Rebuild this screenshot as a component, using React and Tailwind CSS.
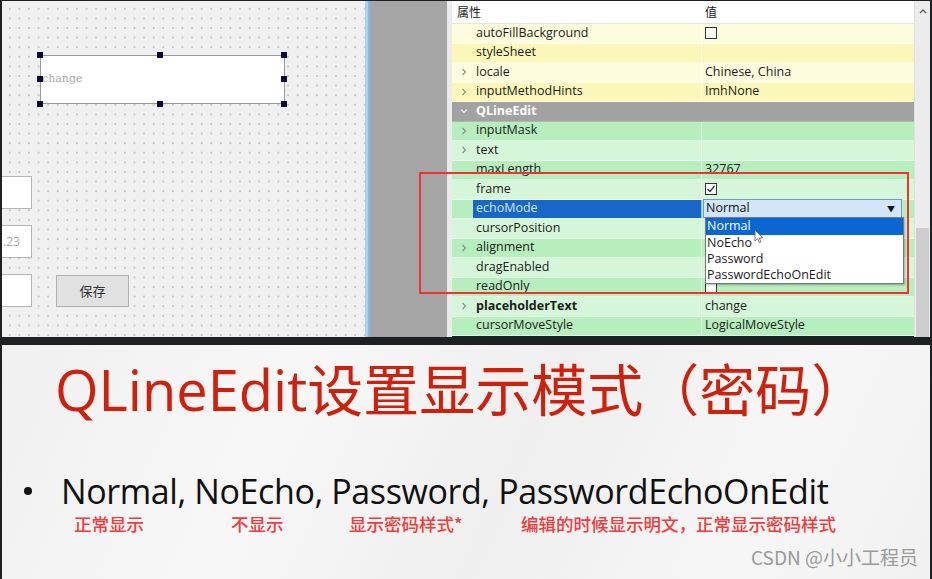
import React from 'react'

const ui = { fontFamily: '"Open Sans", "Noto Sans CJK SC", sans-serif' }
const cjk = { fontFamily: '"Noto Sans CJK SC", sans-serif' }

const ROWS = [
  { name: 'autoFillBackground', bg: 'bg-[#fdfcdc]', value: 'box' },
  { name: 'styleSheet', bg: 'bg-[#fbf7b8]' },
  { name: 'locale', bg: 'bg-[#fdfcdc]', arrow: true, value: 'Chinese, China' },
  { name: 'inputMethodHints', bg: 'bg-[#fbf7b8]', arrow: true, value: 'ImhNone' },
  { group: 'QLineEdit' },
  { name: 'inputMask', bg: 'bg-[#b6eebe]', arrow: true },
  { name: 'text', bg: 'bg-[#d6f6da]', arrow: true },
  { name: 'maxLength', bg: 'bg-[#b6eebe]', value: '32767' },
  { name: 'frame', bg: 'bg-[#d6f6da]', value: 'check' },
  { name: 'echoMode', bg: 'bg-[#b6eebe]', selected: true, value: 'combo' },
  { name: 'cursorPosition', bg: 'bg-[#d6f6da]' },
  { name: 'alignment', bg: 'bg-[#b6eebe]', arrow: true },
  { name: 'dragEnabled', bg: 'bg-[#d6f6da]' },
  { name: 'readOnly', bg: 'bg-[#b6eebe]', value: 'box' },
  { name: 'placeholderText', bg: 'bg-[#d6f6da]', arrow: true, bold: true, value: 'change' },
  { name: 'cursorMoveStyle', bg: 'bg-[#b6eebe]', value: 'LogicalMoveStyle' },
]

function Chevron({ down }) {
  return (
    <svg width="8" height="8" viewBox="0 0 8 8" className="block">
      {down ? (
        <path d="M1 2.5 L4 5.5 L7 2.5" fill="none" stroke="#e8e8e8" strokeWidth="1.3" />
      ) : (
        <path d="M2.5 1 L5.5 4 L2.5 7" fill="none" stroke="#8a8a8a" strokeWidth="1.1" />
      )}
    </svg>
  )
}

function CheckBox({ checked }) {
  return (
    <div className="w-[12px] h-[12px] border border-[#333] bg-white flex items-center justify-center">
      {checked && (
        <svg width="10" height="10" viewBox="0 0 10 10">
          <path d="M1.5 5 L4 7.5 L8.5 2" fill="none" stroke="#333" strokeWidth="1.2" />
        </svg>
      )}
    </div>
  )
}

function Value({ v }) {
  if (v === 'box') return <CheckBox />
  if (v === 'check') return <CheckBox checked />
  if (v === 'combo')
    return (
      <div className="w-[199px] h-[19px] -ml-[2px] border border-[#6d9bc9] bg-[#d3e6f7] flex items-center justify-between pl-[2px] pr-[6px] text-[#111]">
        <span>Normal</span>
        <span className="text-[8px] leading-none">▼</span>
      </div>
    )
  return <span>{v}</span>
}

function Row({ r }) {
  if (r.group)
    return (
      <div className="flex h-[19.5px] shrink-0 bg-[#a2a2a2] border-b border-[#b4b4b4] items-center">
        <div className="w-[21px] flex justify-center pl-[2px]">
          <Chevron down />
        </div>
        <span className="pl-[3px] text-white font-bold">{r.group}</span>
      </div>
    )
  return (
    <div className={`flex h-[19.5px] shrink-0 border-b border-[#ffffff80] ${r.bg}`}>
      <div className="w-[21px] flex items-center justify-center pl-[2px]">{r.arrow && <Chevron />}</div>
      <div
        className={`w-[229px] flex items-center pl-[3px] border-r border-[#ffffff90] ${
          r.selected ? 'bg-[#1767c9] text-[#d4e6ff]' : 'text-[#1c1c1c]'
        } ${r.bold ? 'font-bold' : ''}`}
      >
        {r.name}
      </div>
      <div className="flex-1 flex items-center pl-[3px] text-[#1c1c1c]">{r.value && <Value v={r.value} />}</div>
    </div>
  )
}

function Handle({ cls }) {
  return <div className={`absolute w-[6px] h-[6px] bg-[#0a0a3c] ${cls}`} />
}

function Designer() {
  return (
    <div className="relative w-[363px] h-full overflow-hidden bg-[#f0f0f0] bg-[radial-gradient(circle,#c8c8c8_0.8px,transparent_1.2px)] bg-[size:9.6px_9.6px] bg-[position:3px_3px]">
      <div className="absolute left-[38px] top-[54px] w-[245px] h-[49px] bg-white border border-[#9a9a9a] flex items-center">
        <span className="pl-[1px] text-[11px] text-[#a8a8a8]" style={{ fontFamily: '"DejaVu Serif", "Liberation Serif", serif' }}>
          change
        </span>
      </div>
      <Handle cls="left-[35px] top-[51px]" />
      <Handle cls="left-[155px] top-[51px]" />
      <Handle cls="left-[279px] top-[51px]" />
      <Handle cls="left-[35px] top-[75px]" />
      <Handle cls="left-[279px] top-[75px]" />
      <Handle cls="left-[35px] top-[100px]" />
      <Handle cls="left-[155px] top-[100px]" />
      <Handle cls="left-[279px] top-[100px]" />

      <div className="absolute -left-[4px] top-[175px] w-[34px] h-[33px] bg-white border border-[#b4b4b4]" />
      <div className="absolute -left-[4px] top-[224px] w-[34px] h-[33px] bg-white border border-[#b4b4b4] flex items-center">
        <span className="pl-[4px] text-[12px] text-[#aaa]" style={ui}>.23</span>
      </div>
      <div className="absolute -left-[4px] top-[273px] w-[34px] h-[33px] bg-white border border-[#b4b4b4]" />
      <div
        className="absolute left-[54px] top-[274px] w-[73px] h-[32px] bg-[#e1e1e1] border border-[#b0b0b0] flex items-center justify-center text-[13px] text-[#333]"
        style={cjk}
      >
        保存
      </div>
    </div>
  )
}

function Scrollbar() {
  return (
    <div className="w-[16px] h-full flex flex-col bg-[#ececec] border-l border-[#e0e0e0]">
      <div className="h-[20px] flex items-center justify-center">
        <svg width="8" height="6" viewBox="0 0 8 6">
          <path d="M1 5 L4 2 L7 5" fill="none" stroke="#606060" strokeWidth="1.4" />
        </svg>
      </div>
      <div className="h-[207px]" />
      <div className="flex-1 bg-[#cdcdcd] mx-[1px]" />
    </div>
  )
}

function TopShot() {
  return (
    <div className="relative h-[337px] shrink-0 pt-[1px] flex text-[12.5px]" style={ui}>
      <Designer />
      <div className="w-[5px] h-full bg-[#a8d2ee] border-r-2 border-[#86b8df]" />
      <div className="w-[77px] h-full bg-[#a5a5a5]" />
      <div className="w-[5px] h-full bg-[#ebebeb]" />
      <div className="w-[462px] h-full flex flex-col overflow-hidden">
        <div className="h-[23px] shrink-0 bg-white flex items-center border-b border-[#e4e4e4] text-[12px] text-[#222]" style={cjk}>
          <div className="w-[250px] pl-[5px]">属性</div>
          <div className="pl-[3px]">值</div>
        </div>
        {ROWS.map((r, i) => (
          <Row key={i} r={r} />
        ))}
      </div>
      <Scrollbar />

      <div className="absolute left-[417px] top-[172px] w-[490px] h-[122px] border-2 border-[#f03232]" />

      <div className="absolute left-[703px] top-[217px] w-[199px] h-[67px] bg-white border border-[#7a7a7a] shadow-[1px_1px_2px_rgba(0,0,0,0.3)] flex flex-col text-[#1c1c1c]">
        <div className="h-[17px] bg-[#0a66d3] text-white pl-[1px] flex items-center">Normal</div>
        <div className="h-[16px] pl-[1px] flex items-center">NoEcho</div>
        <div className="h-[16px] pl-[1px] flex items-center">Password</div>
        <div className="h-[16px] pl-[1px] flex items-center">PasswordEchoOnEdit</div>
      </div>
      <svg className="absolute left-[752px] top-[229px]" width="10" height="15" viewBox="0 0 10 15">
        <path d="M1 1 L1 12 L3.6 9.6 L5.4 13.6 L7 12.9 L5.3 9 L8.8 9 Z" fill="white" stroke="#555" strokeWidth="0.8" />
      </svg>
    </div>
  )
}

function Slide() {
  return (
    <div className="relative h-[234px] shrink-0 bg-[#f3f3f3] bg-[linear-gradient(115deg,#f0f0f0_0%,#f7f7f7_30%,#efefef_55%,#f6f6f6_80%,#f1f1f1_100%)] flex flex-col">
      <div
        className="pl-[53px] pt-[10px] h-[72px] text-[56px] leading-[64px] text-[#d0200c] whitespace-nowrap"
        style={{ fontFamily: '"Open Sans", "Noto Sans CJK SC", sans-serif' }}
      >
        QLineEdit
        <span style={cjk}>设置显示模式（密码）</span>
      </div>
      <div className="mt-[57px] flex items-center h-[34px] text-[#111]" style={ui}>
        <div className="ml-[22px] w-[8px] h-[8px] rounded-full bg-[#111]" />
        <div className="ml-[29px] text-[34px] leading-[34px] tracking-[-0.4px] whitespace-nowrap">
          Normal, NoEcho, Password, PasswordEchoOnEdit
        </div>
      </div>
      <div className="mt-[6px] flex text-[17.5px] leading-[20px] text-[#f23b3b] font-medium whitespace-nowrap" style={cjk}>
        <span className="ml-[72px] w-[157px]">正常显示</span>
        <span className="w-[118px]">不显示</span>
        <span className="w-[172px]">显示密码样式*</span>
        <span>编辑的时候显示明文，正常显示密码样式</span>
      </div>
      <div className="mt-[12px] flex justify-end pr-[12px] text-[19px] leading-[22px] text-[#9a9a9a]" style={cjk}>
        CSDN @小小工程员
      </div>
    </div>
  )
}

export default function App() {
  return (
    <div className="w-[932px] h-[579px] bg-[#1e2124] flex flex-col pl-[2px] pr-[2px] overflow-hidden">
      <TopShot />
      <div className="h-[8px] shrink-0" />
      <Slide />
    </div>
  )
}
